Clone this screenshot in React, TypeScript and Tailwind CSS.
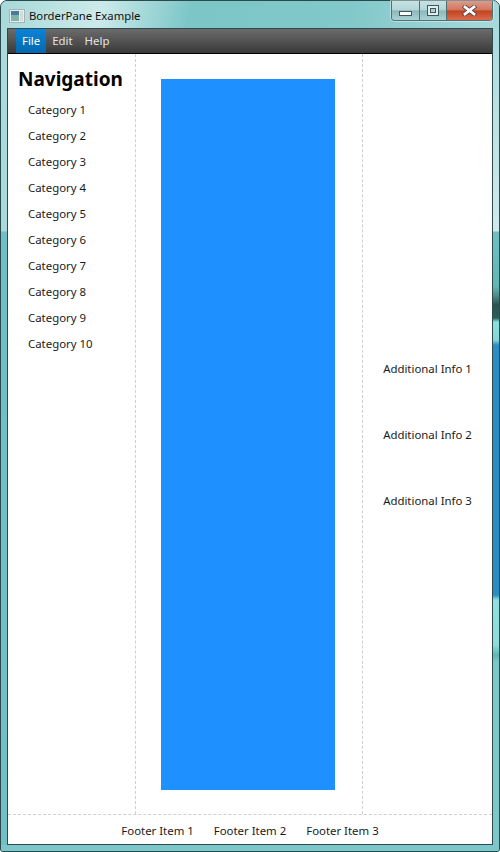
const categories = ["Category 1", "Category 2", "Category 3", "Category 4", "Category 5", "Category 6", "Category 7", "Category 8", "Category 9", "Category 10"];
const infos = ["Additional Info 1", "Additional Info 2", "Additional Info 3"];
const footerItems = ["Footer Item 1", "Footer Item 2", "Footer Item 3"];
const menus = ["File", "Edit", "Help"];

function AppIcon() {
  return (
    <svg width="16" height="16" viewBox="0 0 16 16" className="shrink-0">
      <rect x="0.5" y="1.5" width="15" height="13" fill="#e8eeee" stroke="#a8b4b4" />
      <rect x="2" y="3" width="8" height="10" fill="#7fb5a8" />
      <rect x="2" y="3" width="8" height="4" fill="#4a7a9c" />
      <rect x="11" y="3" width="3" height="10" fill="#cfdcda" />
    </svg>
  );
}

function WindowButtons() {
  return (
    <div className="flex h-[20px] w-[102px] overflow-hidden rounded-b-[4px] border border-t-0 border-[#4f6f73] shadow-[0_0_0_1px_rgba(255,255,255,0.4)]">
      <div className="flex w-[28px] items-end justify-center border-r border-[#4f6f73] pb-[4px] bg-[linear-gradient(#c6e2e3_0%,#b4d6d8_46%,#8db8ba_52%,#a9d3d5_100%)]">
        <div className="h-[5px] w-[13px] border border-[#44565a] bg-white" />
      </div>
      <div className="flex w-[27px] items-center justify-center border-r border-[#4f6f73] bg-[linear-gradient(#c6e2e3_0%,#b4d6d8_46%,#8db8ba_52%,#a9d3d5_100%)]">
        <div className="flex h-[11px] w-[12px] items-center justify-center border border-[#44565a] bg-[#dfeeef]">
          <div className="h-[5px] w-[6px] border border-[#44565a] bg-[#a9cfd2]" />
        </div>
      </div>
      <div className="flex flex-1 items-center justify-center bg-[linear-gradient(#dd9a88_0%,#d27a62_44%,#c4441f_54%,#d96c4e_100%)]">
        <svg width="15" height="11" viewBox="0 0 15 11">
          <path d="M3 2 L12 9 M12 2 L3 9" stroke="#54413f" strokeWidth="4.4" strokeLinecap="square" />
          <path d="M3 2 L12 9 M12 2 L3 9" stroke="#ffffff" strokeWidth="2.8" strokeLinecap="square" />
        </svg>
      </div>
    </div>
  );
}

export default function App() {
  return (
    <div
      className="flex h-[852px] w-[500px] flex-col rounded-t-[7px] rounded-b-[3px] border border-[#2c4a4e] bg-[#7cc7cc]"
      style={{ fontFamily: '"Noto Sans", "Open Sans", sans-serif' }}
    >
      <div className="flex h-[27px] shrink-0 items-start justify-between rounded-t-[6px] pr-[6px] pl-[8px] bg-[linear-gradient(100deg,#a7d8d8_0%,#cdeaea_20%,#7cc6c8_38%,#82c8ca_70%,#a9d9da_100%)]">
        <div className="flex h-full items-center gap-[4px] pt-[3px]">
          <AppIcon />
          <span className="text-[11.3px] text-[#111]">BorderPane Example</span>
        </div>
        <WindowButtons />
      </div>

      <div className="flex min-h-0 flex-1">
        <div className="w-[6px] shrink-0 bg-[linear-gradient(#a8dcde_0px,#a8dadc_203px,#70bfc4_204px,#72c0c5_100%)]" />

        <div className="flex min-w-0 flex-1 flex-col border border-[#30494c] bg-white">
          <div className="flex h-[25px] shrink-0 border-b border-black pl-[8px] bg-[linear-gradient(#6b6b6b_0%,#5a5a5a_35%,#3a3a3a_100%)]">
            {menus.map((menu, i) => (
              <div
                key={menu}
                className={
                  i === 0
                    ? "flex items-center px-[6px] text-[11.4px] text-white bg-[linear-gradient(#0a83d8,#0369b0)]"
                    : "flex items-center px-[6px] text-[11.4px] text-[#e4e4e4]"
                }
              >
                {menu}
              </div>
            ))}
          </div>

          <div className="flex min-h-0 flex-1 border-b border-dashed border-[#cfcfcf]">
            <div className="flex w-[128px] shrink-0 flex-col border-r border-dashed border-[#cfcfcf] pt-[10px] pl-[10px]">
              <h1 className="mb-[3px] h-[30px] text-[19px] leading-[30px] font-bold text-black">Navigation</h1>
              <div className="flex flex-col pl-[10px]">
                {categories.map((c) => (
                  <div key={c} className="h-[26px] text-[11.4px] leading-[26px] text-[#1a1a1a]">
                    {c}
                  </div>
                ))}
              </div>
            </div>

            <div className="flex w-[227px] shrink-0 border-r border-dashed border-[#cfcfcf] pt-[25px] pl-[25px]">
              <div className="h-[711px] w-[174px] bg-[#1e90ff]" />
            </div>

            <div className="flex flex-1 flex-col items-center justify-center gap-[45px]">
              {infos.map((info) => (
                <div key={info} className="h-[21px] text-[11.4px] leading-[21px] text-[#1a1a1a]">
                  {info}
                </div>
              ))}
            </div>
          </div>

          <div className="flex h-[29px] shrink-0 items-center justify-center gap-[20px] pt-[3px] text-[11.4px] text-[#1a1a1a]">
            {footerItems.map((item) => (
              <span key={item}>{item}</span>
            ))}
          </div>
        </div>

        <div className="w-[6px] shrink-0 bg-[linear-gradient(#a9dcdf_0px,#d0e9ec_203px,#70bfc4_204px,#5fb8b8_258px,#4f8f8c_267px,#2a5350_277px,#285f5c_290px,#8ae0e0_294px,#86d6d8_312px,#2a8ec4_317px,#2a8ec4_567px,#8fe0e0_572px,#8fdcdc_617px,#5fb5b5_627px,#7cc7cc_634px,#7cc7cc_100%)]" />
      </div>

      <div className="h-[6px] shrink-0 rounded-b-[3px] bg-[#7cc7cc]" />
    </div>
  );
}
